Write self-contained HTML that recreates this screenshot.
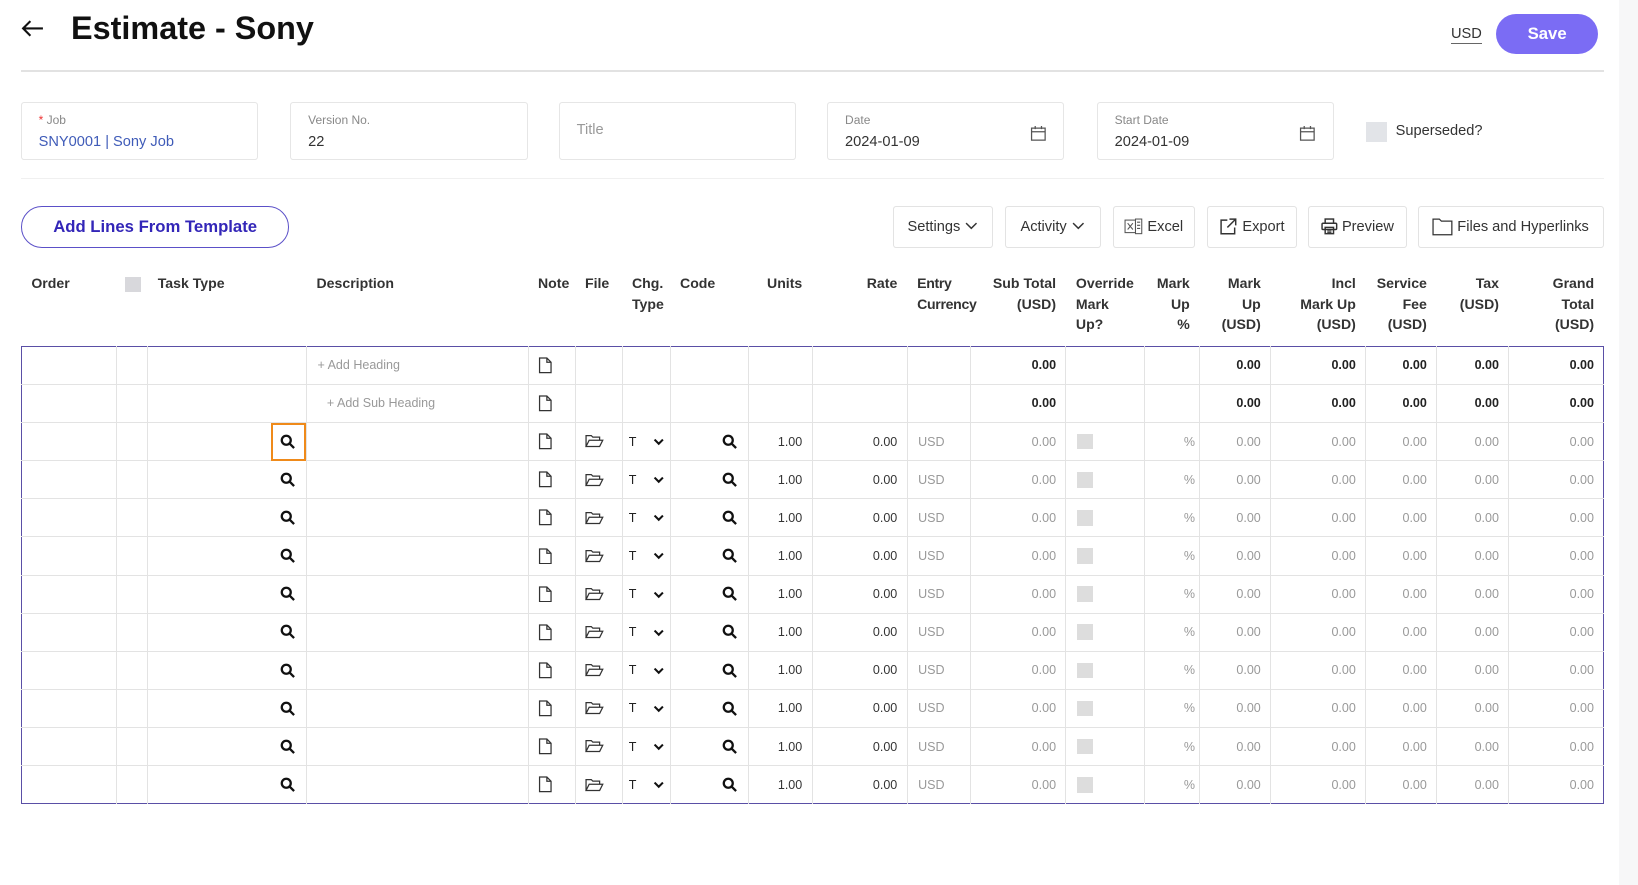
<!DOCTYPE html>
<html><head><meta charset="utf-8"><style>
*{box-sizing:border-box;margin:0;padding:0}
html,body{width:1638px;height:885px;overflow:hidden;background:#fff}
#w{width:1568px;height:847px;position:relative;zoom:1.04464;font-family:"Liberation Sans",sans-serif;color:#222}
.abs{position:absolute}
.fld{position:absolute;top:98px;width:227px;height:55px;border:1px solid #e6e6e6;border-radius:3px;background:#fff}
.fld .l{position:absolute;left:16px;top:9px;font-size:11.5px;color:#888}
.fld .v{position:absolute;left:16px;top:29px;font-size:14px;color:#333}
.btn{position:absolute;top:197px;height:40px;border:1px solid #e3e3e3;border-radius:3px;font-size:14px;color:#333;display:flex;align-items:center;justify-content:center;gap:4px;background:#fff}
table{border-collapse:collapse;table-layout:fixed;position:absolute;left:20px;width:1515px}
.hd td{font-size:13.5px;font-weight:bold;color:#333;line-height:20px;vertical-align:top;padding:0 9px 0 10px;white-space:nowrap}
.bd{top:331px;border:1px solid #5a4fa6}
.bd td{height:36.5px;border:1px solid #e3e3e3;font-size:12px;color:#999;padding:0 9px;text-align:right;position:relative}
.bd tr:first-child td{border-top:none}
.bd tr:last-child td{border-bottom:none}
.bd td:first-child{border-left:none}
.bd td:last-child{border-right:none}
.bd .k{color:#222;font-weight:bold}
.r{text-align:right}
.cb{display:inline-block;width:15px;height:15px;background:#ddd;vertical-align:middle}
svg{vertical-align:middle}
</style></head><body><div id="w">
<div class="abs" style="left:1550px;top:0;width:18px;height:847px;background:#f7f7f8"></div>
<svg class="abs" style="left:20px;top:18px" width="22" height="18" viewBox="0 0 22 18"><path d="M21 9H2M9 2L2 9l7 7" fill="none" stroke="#111" stroke-width="2"/></svg>
<div class="abs" style="left:68px;top:10px;font-size:31px;font-weight:bold;color:#111">Estimate - Sony</div>
<div class="abs" style="left:1389px;top:25px;font-size:14px;color:#333;border-bottom:1px solid #666;line-height:16px">USD</div>
<div class="abs" style="left:1432px;top:13px;width:98px;height:39px;border-radius:20px;background:#7b6cf4;color:#fff;font-weight:bold;font-size:16px;display:flex;align-items:center;justify-content:center">Save</div>
<div class="abs" style="left:20px;top:67px;width:1515px;height:2px;background:#e2e2e2"></div>
<div class="abs" style="left:20px;top:170px;width:1515px;height:1px;background:#f0f0f0"></div>
<div class="fld" style="left:20px"><span class="l"><span style="color:#e33">*</span> Job</span><span class="v" style="color:#3f5bb8">SNY0001 | Sony Job</span></div>
<div class="fld" style="left:278px"><span class="l">Version No.</span><span class="v">22</span></div>
<div class="fld" style="left:535px"><span class="l" style="top:18px;font-size:14px;color:#999">Title</span></div>
<div class="fld" style="left:792px"><span class="l">Date</span><span class="v">2024-01-09</span><svg class="abs" style="left:193px;top:21px" width="16" height="16" viewBox="0 0 16 16" fill="none" stroke="#555" stroke-width="1.2"><rect x="1.5" y="3" width="13" height="11.5"/><path d="M1.5 6.5h13M5 1v3M11 1v3"/></svg></div>
<div class="fld" style="left:1050px"><span class="l">Start Date</span><span class="v">2024-01-09</span><svg class="abs" style="left:193px;top:21px" width="16" height="16" viewBox="0 0 16 16" fill="none" stroke="#555" stroke-width="1.2"><rect x="1.5" y="3" width="13" height="11.5"/><path d="M1.5 6.5h13M5 1v3M11 1v3"/></svg></div>
<div class="abs" style="left:1308px;top:117px;width:20px;height:19px;background:#e2e4e8"></div>
<div class="abs" style="left:1336px;top:118px;font-size:14px;color:#333">Superseded?</div>
<div class="abs" style="left:20px;top:197px;width:257px;height:40px;border:1px solid #5b50c8;border-radius:20px;color:#3326b8;font-weight:bold;font-size:16px;display:flex;align-items:center;justify-content:center">Add Lines From Template</div>
<div class="btn" style="left:855px;width:96px">Settings <svg width="14" height="10" viewBox="0 0 14 10"><path d="M2 2l5 5 5-5" fill="none" stroke="#333" stroke-width="1.4"/></svg></div>
<div class="btn" style="left:962px;width:92px">Activity <svg width="14" height="10" viewBox="0 0 14 10"><path d="M2 2l5 5 5-5" fill="none" stroke="#333" stroke-width="1.4"/></svg></div>
<div class="btn" style="left:1065px;width:79px"><svg width="18" height="16" viewBox="0 0 18 16" fill="none" stroke="#555" stroke-width="1"><rect x="1" y="2" width="10" height="12"/><rect x="11" y="1" width="6" height="14"/><path d="M3.5 5l5 6M8.5 5l-5 6M12.5 4h3M12.5 7h3M12.5 10h3"/></svg>Excel</div>
<div class="btn" style="left:1155px;width:87px"><svg width="18" height="18" viewBox="0 0 18 18" fill="none" stroke="#333" stroke-width="1.4"><path d="M8 3H2v13h13v-6M10 2h6v6M16 2L8 10"/></svg>Export</div>
<div class="btn" style="left:1252px;width:95px"><svg width="16" height="16" viewBox="0 0 16 16" fill="none" stroke="#333" stroke-width="1.4"><rect x="4" y="1" width="8" height="4"/><rect x="1" y="5" width="14" height="6" rx="1"/><rect x="4" y="9" width="8" height="6"/><path d="M6 11.5h4M6 13.5h4"/></svg>Preview</div>
<div class="btn" style="left:1357px;width:178px"><svg width="20" height="18" viewBox="0 0 20 18" fill="none" stroke="#333" stroke-width="1.2"><path d="M1 2h6l2 2h10v13H1z"/></svg> Files and Hyperlinks</div>

<table class="hd" style="top:261px">
<colgroup><col style="width:91px"><col style="width:30px"><col style="width:152px"><col style="width:212px"><col style="width:45px"><col style="width:45px"><col style="width:46px"><col style="width:75px"><col style="width:61px"><col style="width:91px"><col style="width:61px"><col style="width:91px"><col style="width:75px"><col style="width:53px"><col style="width:68px"><col style="width:91px"><col style="width:68px"><col style="width:69px"><col style="width:91px"></colgroup>
<tr><td>Order</td><td style="padding:0 0 0 9px"><span class="cb" style="margin-top:1px;background:#d8d8dc"></span></td><td>Task Type</td><td>Description</td><td style="padding:0 0 0 10px">Note</td><td style="padding:0 0 0 10px">File</td><td style="padding:0 0 0 10px">Chg.<br>Type</td><td>Code</td><td class="r">Units</td><td class="r">Rate</td><td style="padding:0 0 0 10px;letter-spacing:-0.3px">Entry<br>Currency</td><td class="r">Sub Total<br>(USD)</td><td style="padding:0 0 0 10px">Override<br>Mark<br>Up?</td><td class="r" style="padding:0 9px 0 0">Mark<br>Up<br>%</td><td class="r">Mark<br>Up<br>(USD)</td><td class="r">Incl<br>Mark Up<br>(USD)</td><td class="r">Service<br>Fee<br>(USD)</td><td class="r">Tax<br>(USD)</td><td class="r">Grand<br>Total<br>(USD)</td></tr>
</table>

<table class="bd" id="t">
<colgroup><col style="width:91px"><col style="width:30px"><col style="width:152px"><col style="width:212px"><col style="width:45px"><col style="width:45px"><col style="width:46px"><col style="width:75px"><col style="width:61px"><col style="width:91px"><col style="width:61px"><col style="width:91px"><col style="width:75px"><col style="width:53px"><col style="width:68px"><col style="width:91px"><col style="width:68px"><col style="width:69px"><col style="width:91px"></colgroup>
<tr><td></td><td></td><td></td><td style="text-align:left;padding-left:10px;color:#999">+ Add Heading</td><td style="text-align:left"><svg width="14" height="16" viewBox="0 0 14 16" fill="none" stroke="#333" stroke-width="1.2"><path d="M1.5 1h7l4 4v10h-11zM8.5 1v4h4"/></svg></td><td></td><td></td><td></td><td></td><td></td><td></td><td class="k">0.00</td><td></td><td></td><td class="k">0.00</td><td class="k">0.00</td><td class="k">0.00</td><td class="k">0.00</td><td class="k">0.00</td></tr>
<tr><td></td><td></td><td></td><td style="text-align:left;padding-left:19px;color:#999">+ Add Sub Heading</td><td style="text-align:left"><svg width="14" height="16" viewBox="0 0 14 16" fill="none" stroke="#333" stroke-width="1.2"><path d="M1.5 1h7l4 4v10h-11zM8.5 1v4h4"/></svg></td><td></td><td></td><td></td><td></td><td></td><td></td><td class="k">0.00</td><td></td><td></td><td class="k">0.00</td><td class="k">0.00</td><td class="k">0.00</td><td class="k">0.00</td><td class="k">0.00</td></tr>
</table>
<script>
var t=document.getElementById('t');
var q='<svg width="15" height="15" viewBox="0 0 15 15" fill="none" stroke="#111" stroke-width="2.2"><circle cx="6" cy="6" r="4.3"/><path d="M9.3 9.3L13.5 13.5"/></svg>';
var doc='<svg width="14" height="16" viewBox="0 0 14 16" fill="none" stroke="#333" stroke-width="1.2"><path d="M1.5 1h7l4 4v10h-11zM8.5 1v4h4"/></svg>';
var fold='<svg width="18" height="14" viewBox="0 0 18 14" fill="none" stroke="#333" stroke-width="1.2"><path d="M1 12V1.5h5l1.5 1.5H14v3M1 12l3-6h13l-3 6z"/></svg>';
var chev='<svg width="11" height="8" viewBox="0 0 11 8"><path d="M1.5 1.5l4 4 4-4" fill="none" stroke="#111" stroke-width="2"/></svg>';
for(var i=0;i<10;i++){
var tr=document.createElement('tr');
tr.innerHTML='<td></td><td></td><td style="padding-right:10px">'+(i==0?'<div style="position:absolute;right:0;top:0;width:34px;height:36px;border:2px solid #ef8a1a"></div>':'')+q+'</td><td></td><td style="text-align:left">'+doc+'</td><td style="text-align:left">'+fold+'</td><td style="text-align:left;color:#222;padding-left:6px">T<span style="float:right;margin-right:-4px">'+chev+'</span></td><td style="padding-right:10px">'+q+'</td><td style="color:#333">1.00</td><td style="color:#333">0.00</td><td style="text-align:left;padding-left:10px">USD</td><td>0.00</td><td style="text-align:left;padding-left:10px"><span class="cb"></span></td><td style="padding-right:4px">%</td><td>0.00</td><td>0.00</td><td>0.00</td><td>0.00</td><td>0.00</td>';
t.appendChild(tr);}
</script>
</div></body></html>
